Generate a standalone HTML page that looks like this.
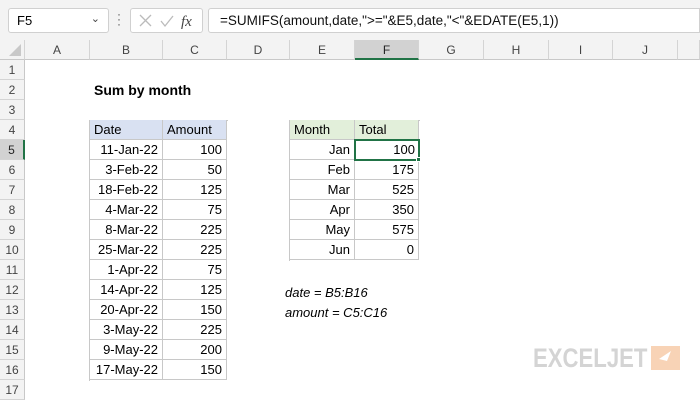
<!DOCTYPE html>
<html><head><style>
body{margin:0;width:700px;height:400px;overflow:hidden;background:#fff;font-family:"Liberation Sans",Arial,sans-serif;font-size:13px;position:relative}
.a{position:absolute;box-sizing:border-box}
.ch{position:absolute;top:40px;height:20px;line-height:20px;text-align:center;color:#444;border-right:1px solid #d4d4d4;background:#f3f3f3;border-bottom:1px solid #c8c8c8;box-sizing:border-box;font-size:12px}
.rh{position:absolute;left:0;width:25px;height:20px;line-height:20px;text-align:center;color:#444;background:#f3f3f3;border-bottom:1px solid #d4d4d4;border-right:1px solid #c8c8c8;box-sizing:border-box;font-size:12px}
.c{position:absolute;height:20px;line-height:20px;box-sizing:border-box;padding:0 4px;white-space:nowrap}
.r{text-align:right}
.b{border-right:1px solid #c8c8c8;border-bottom:1px solid #c8c8c8}
</style></head><body>
<div class="a" style="left:0;top:0;width:700px;height:40px;background:#f3f3f3"></div>
<div class="a" style="left:8px;top:8px;width:101px;height:25px;background:#fff;border:1px solid #d0d0d0;border-radius:3px;padding:4px 8px;font-size:13px">F5<span style="position:absolute;right:8px;top:3px;font-size:11px;color:#444">&#8964;</span></div>
<div class="a" style="left:117px;top:12px;width:3px;height:16px;color:#555;font-size:12px;line-height:5px">·<br>·<br>·</div>
<div class="a" style="left:130px;top:8px;width:73px;height:25px;background:#fff;border:1px solid #d0d0d0;border-radius:3px"></div>
<svg class="a" style="left:137px;top:13px" width="60" height="16"><path d="M3 2l11 11M14 2L3 13" stroke="#bbb" stroke-width="1.3" fill="none"/><path d="M24 8l4 5 8-10" stroke="#bbb" stroke-width="1.3" fill="none"/><text x="44" y="13" font-family="Liberation Serif" font-style="italic" font-size="15" fill="#444">fx</text></svg>
<div class="a" style="left:208px;top:8px;width:492px;height:25px;background:#fff;border:1px solid #d0d0d0;border-radius:3px 0 0 3px;padding:4px 11px;font-size:13.5px;color:#111">=SUMIFS(amount,date,"&gt;="&amp;E5,date,"&lt;"&amp;EDATE(E5,1))</div>
<div class="ch" style="left:0;width:25px"><svg width="25" height="20"><path d="M9 16h12V4z" fill="#c8c8c8"/></svg></div>
<div class="ch" style="left:25px;width:65px">A</div>
<div class="ch" style="left:90px;width:73px">B</div>
<div class="ch" style="left:163px;width:64px">C</div>
<div class="ch" style="left:227px;width:63px">D</div>
<div class="ch" style="left:290px;width:65px">E</div>
<div class="ch" style="left:355px;width:64px;background:#d2d2d2;border-bottom:2px solid #217346;color:#222">F</div>
<div class="ch" style="left:419px;width:65px">G</div>
<div class="ch" style="left:484px;width:65px">H</div>
<div class="ch" style="left:549px;width:64px">I</div>
<div class="ch" style="left:613px;width:65px">J</div>
<div class="ch" style="left:678px;width:22px"></div>
<div class="rh" style="top:60px">1</div><div class="rh" style="top:80px">2</div><div class="rh" style="top:100px">3</div><div class="rh" style="top:120px">4</div>
<div class="rh" style="top:140px;background:#d2d2d2;border-right:2px solid #217346;color:#222">5</div>
<div class="rh" style="top:160px">6</div><div class="rh" style="top:180px">7</div><div class="rh" style="top:200px">8</div><div class="rh" style="top:220px">9</div><div class="rh" style="top:240px">10</div><div class="rh" style="top:260px">11</div><div class="rh" style="top:280px">12</div><div class="rh" style="top:300px">13</div><div class="rh" style="top:320px">14</div><div class="rh" style="top:340px">15</div><div class="rh" style="top:360px">16</div><div class="rh" style="top:380px">17</div>
<div class="c" style="left:90px;top:80px;font-weight:bold;font-size:14px">Sum by month</div>
<div class="a" style="left:89px;top:120px;width:139px;height:261px;border-left:1px solid #c8c8c8;border-top:1px solid #c8c8c8"></div>
<div class="c b" style="left:90px;top:120px;width:73px;background:#d9e1f2">Date</div>
<div class="c b" style="left:163px;top:120px;width:64px;background:#d9e1f2">Amount</div>
<div class="c b r" style="left:90px;top:140px;width:73px">11-Jan-22</div><div class="c b r" style="left:163px;top:140px;width:64px">100</div>
<div class="c b r" style="left:90px;top:160px;width:73px">3-Feb-22</div><div class="c b r" style="left:163px;top:160px;width:64px">50</div>
<div class="c b r" style="left:90px;top:180px;width:73px">18-Feb-22</div><div class="c b r" style="left:163px;top:180px;width:64px">125</div>
<div class="c b r" style="left:90px;top:200px;width:73px">4-Mar-22</div><div class="c b r" style="left:163px;top:200px;width:64px">75</div>
<div class="c b r" style="left:90px;top:220px;width:73px">8-Mar-22</div><div class="c b r" style="left:163px;top:220px;width:64px">225</div>
<div class="c b r" style="left:90px;top:240px;width:73px">25-Mar-22</div><div class="c b r" style="left:163px;top:240px;width:64px">225</div>
<div class="c b r" style="left:90px;top:260px;width:73px">1-Apr-22</div><div class="c b r" style="left:163px;top:260px;width:64px">75</div>
<div class="c b r" style="left:90px;top:280px;width:73px">14-Apr-22</div><div class="c b r" style="left:163px;top:280px;width:64px">125</div>
<div class="c b r" style="left:90px;top:300px;width:73px">20-Apr-22</div><div class="c b r" style="left:163px;top:300px;width:64px">150</div>
<div class="c b r" style="left:90px;top:320px;width:73px">3-May-22</div><div class="c b r" style="left:163px;top:320px;width:64px">225</div>
<div class="c b r" style="left:90px;top:340px;width:73px">9-May-22</div><div class="c b r" style="left:163px;top:340px;width:64px">200</div>
<div class="c b r" style="left:90px;top:360px;width:73px">17-May-22</div><div class="c b r" style="left:163px;top:360px;width:64px">150</div>
<div class="a" style="left:289px;top:120px;width:131px;height:141px;border-left:1px solid #c8c8c8;border-top:1px solid #c8c8c8"></div>
<div class="c b" style="left:290px;top:120px;width:65px;background:#e2efda">Month</div>
<div class="c b" style="left:355px;top:120px;width:64px;background:#e2efda">Total</div>
<div class="c b r" style="left:290px;top:140px;width:65px">Jan</div><div class="c r" style="left:355px;top:140px;width:64px">100</div>
<div class="c b r" style="left:290px;top:160px;width:65px">Feb</div><div class="c b r" style="left:355px;top:160px;width:64px">175</div>
<div class="c b r" style="left:290px;top:180px;width:65px">Mar</div><div class="c b r" style="left:355px;top:180px;width:64px">525</div>
<div class="c b r" style="left:290px;top:200px;width:65px">Apr</div><div class="c b r" style="left:355px;top:200px;width:64px">350</div>
<div class="c b r" style="left:290px;top:220px;width:65px">May</div><div class="c b r" style="left:355px;top:220px;width:64px">575</div>
<div class="c b r" style="left:290px;top:240px;width:65px">Jun</div><div class="c b r" style="left:355px;top:240px;width:64px">0</div>
<div class="a" style="left:354px;top:139px;width:66px;height:22px;border:2px solid #217346"></div>
<div class="a" style="left:416px;top:157px;width:5px;height:5px;background:#217346;border:1px solid #fff"></div>
<div class="c" style="left:281px;top:283px;font-style:italic">date = B5:B16</div>
<div class="c" style="left:281px;top:303px;font-style:italic">amount = C5:C16</div>
<div class="a" style="left:533px;top:343px;font-size:27px;font-weight:bold;color:#d4d4d4;line-height:30px;transform:scaleX(0.82);transform-origin:left">EXCELJET</div>
<div class="a" style="left:651px;top:346px;width:29px;height:24px;background:#f8d3b6"><svg width="29" height="24"><path d="M20 5L8 13l8 2z" fill="#fff"/></svg></div>
</body></html>
